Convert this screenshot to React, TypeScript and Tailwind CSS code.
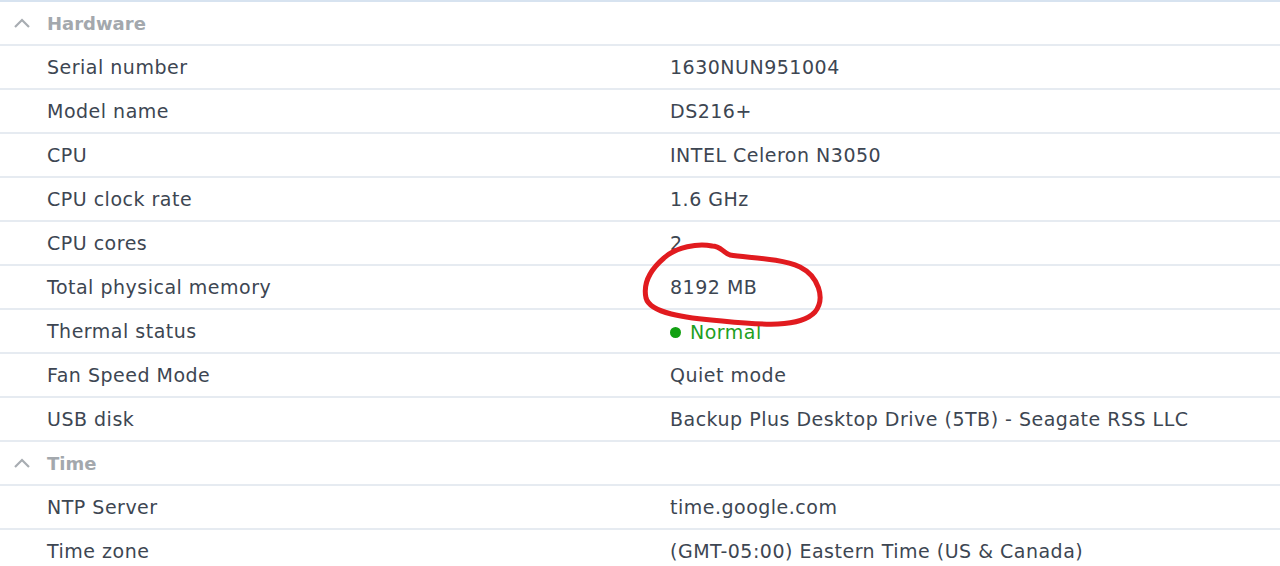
import React from "react";

type Row = { label: string; value: React.ReactNode };

const hardware: Row[] = [
  { label: "Serial number", value: "1630NUN951004" },
  { label: "Model name", value: "DS216+" },
  { label: "CPU", value: "INTEL Celeron N3050" },
  { label: "CPU clock rate", value: "1.6 GHz" },
  { label: "CPU cores", value: "2" },
  { label: "Total physical memory", value: "8192 MB" },
  {
    label: "Thermal status",
    value: (
      <span className="flex items-center gap-[9px] pt-[2px] text-[#1fa01f]">
        <span className="h-[11px] w-[11px] rounded-full bg-[#12a012]" />
        Normal
      </span>
    ),
  },
  { label: "Fan Speed Mode", value: "Quiet mode" },
  { label: "USB disk", value: "Backup Plus Desktop Drive (5TB) - Seagate RSS LLC" },
];

const time: Row[] = [
  { label: "NTP Server", value: "time.google.com" },
  { label: "Time zone", value: "(GMT-05:00) Eastern Time (US & Canada)" },
];

function Chevron() {
  return (
    <svg width="18" height="12" viewBox="0 0 18 12" className="shrink-0">
      <path d="M2 10 L9 3 L16 10" fill="none" stroke="#a8adb2" strokeWidth="2.2" />
    </svg>
  );
}

function Section({ title }: { title: string }) {
  return (
    <div className="flex h-[44px] items-center border-b-2 border-[#e6ebf1] pl-[13px]">
      <Chevron />
      <span className="ml-[16px] text-[18px] font-bold text-[#a3a8ad]">{title}</span>
    </div>
  );
}

function InfoRow({ row }: { row: Row }) {
  return (
    <div className="flex h-[44px] items-center border-b-2 border-[#e6ebf1] text-[19px] tracking-[0.5px]">
      <div className="w-[670px] pl-[47px]">{row.label}</div>
      <div>{row.value}</div>
    </div>
  );
}

export default function App() {
  return (
    <div className="relative h-[566px] w-[1280px] overflow-hidden bg-white text-[#3d4652] [font-family:'DejaVu_Sans',Verdana,sans-serif]">
      <div className="border-t-2 border-[#d7e3f0]">
        <Section title="Hardware" />
        {hardware.map((r) => (
          <InfoRow key={r.label} row={r} />
        ))}
        <Section title="Time" />
        {time.map((r) => (
          <InfoRow key={r.label} row={r} />
        ))}
      </div>
      <svg className="pointer-events-none absolute left-0 top-0" width="1280" height="566">
        <path
          d="M712 246 C698 243 676 247 664 258 C650 270 643 284 646 298 C650 313 684 318 722 321 C762 325 800 328 815 312 C826 298 818 276 800 267 C780 258 748 258 730 255 C722 252 721 246 712 246"
          fill="none"
          stroke="#e11b1f"
          strokeWidth="5"
          strokeLinecap="round"
        />
      </svg>
    </div>
  );
}
